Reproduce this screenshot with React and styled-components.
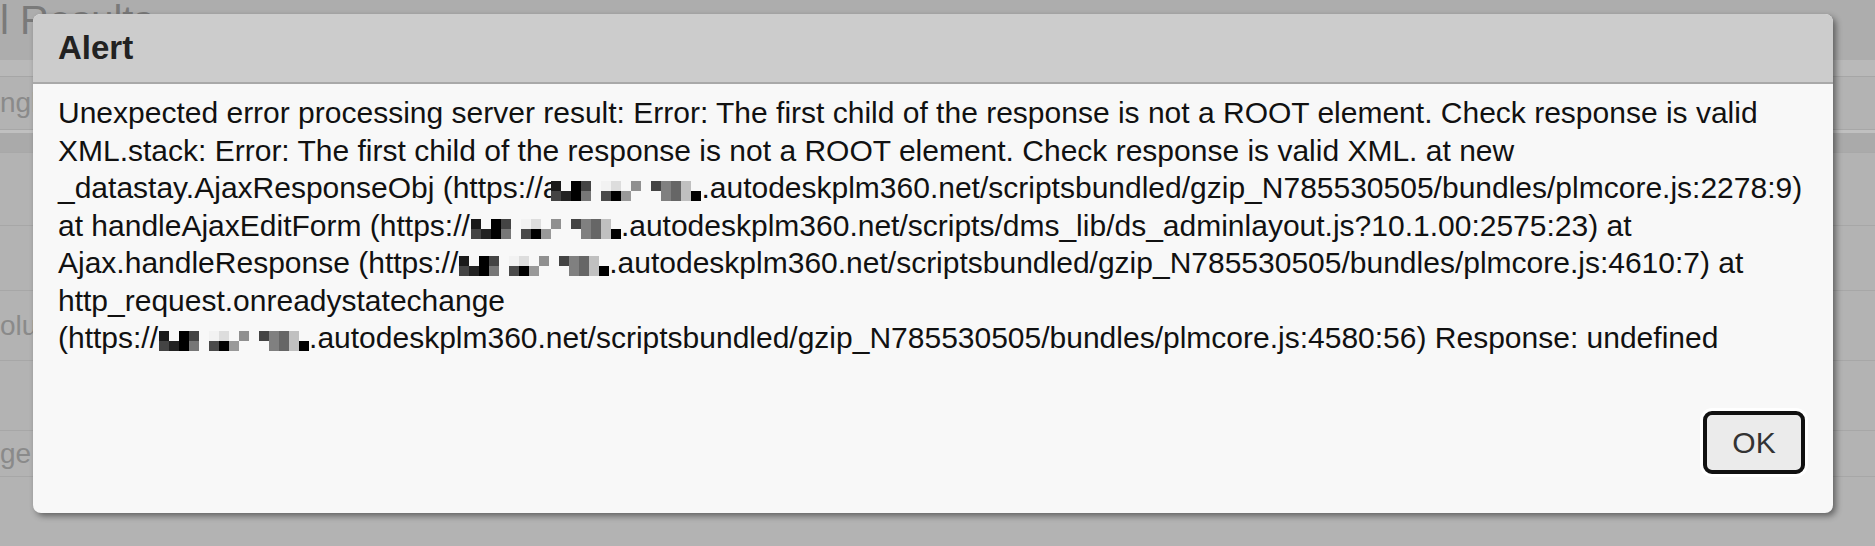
import React from "react";
import styled, { createGlobalStyle } from "styled-components";

const Global = createGlobalStyle`
  html, body { margin: 0; padding: 0; background: #b3b3b3; }
  body { font-family: "Liberation Sans", Arial, sans-serif; }
  #root { width: 1875px; height: 546px; overflow: hidden; position: relative; }
`;

const Page = styled.div`
  width: 1875px;
  height: 546px;
  display: flex;
  flex-direction: column;
  background: #b3b3b3;
  color: #7d7d7d;
`;

const TopBar = styled.div`
  height: 60px;
  background: #adadad;
  display: flex;
  align-items: flex-start;
`;

const PageTitle = styled.div`
  font-size: 40px;
  line-height: 40px;
  color: #7a7a7a;
  white-space: nowrap;
`;

const Band = styled.div`
  height: ${(p) => p.$h}px;
  background: ${(p) => p.$bg};
  border-bottom: 1px solid ${(p) => p.$line || "transparent"};
  flex: none;
`;

const FieldRow = styled.div`
  height: ${(p) => p.$h}px;
  flex: none;
  display: flex;
  align-items: center;
  border-bottom: 1px solid #a7a7a7;
  font-size: 28px;
  color: #8a8a8a;
  white-space: nowrap;
`;

const RedactSvg = styled.svg`
  display: inline-block;
  vertical-align: -3px;
  margin-left: ${(p) => p.$shift}px;
`;

const Redact = ({ top, bottom, shift = 1 }) => (
  <RedactSvg $shift={shift} width="150" height="20" viewBox="0 0 150 20">
    {top.map((c, i) =>
      c ? <rect key={"t" + i} x={i * 10} y="0" width="10" height="10" fill={c} /> : null
    )}
    {bottom.map((c, i) =>
      c ? <rect key={"b" + i} x={i * 10} y="10" width="10" height="10" fill={c} /> : null
    )}
  </RedactSvg>
);

const TOP = ["#1a1a1a", null, "#000", "#444", null, "#f2f2f2", "#ddd", null, "#909090", null, "#444", "#808080", "#666", "#c0c0c0", null];
const BOTTOM = ["#444", "#222", "#000", "#777", null, "#4a4a4a", "#000", "#999", null, null, null, "#808080", "#666", "#c0c0c0", "#000"];

const Dialog = styled.div`
  position: absolute;
  left: 33px;
  top: 14px;
  width: 1800px;
  height: 499px;
  background: #f8f8f8;
  border-radius: 8px;
  box-shadow: 3px 3px 6px rgba(0, 0, 0, 0.45);
  display: flex;
  flex-direction: column;
  overflow: hidden;
`;

const Header = styled.div`
  height: 68px;
  flex: none;
  background: #cccccc;
  border-bottom: 2px solid #a9a9a9;
  display: flex;
  align-items: center;
  padding: 0 25px;
`;

const Title = styled.h1`
  margin: 0;
  font-size: 33px;
  font-weight: 700;
  color: #222;
`;

const Body = styled.div`
  padding: 10px 8px 0 25px;
  font-size: 30px;
  line-height: 37.5px;
  color: #111;
`;

const Url = styled.span`
  white-space: nowrap;
`;

const Footer = styled.div`
  margin-top: auto;
  display: flex;
  justify-content: flex-end;
  padding: 0 28px 39px;
`;

const OkButton = styled.button`
  width: 102px;
  height: 63px;
  border: 4px solid #111;
  border-radius: 9px;
  background: #ebebeb;
  color: #333;
  font-family: "Liberation Sans", Arial, sans-serif;
  font-size: 30px;
  box-shadow: 0 0 0 3px #fff;
  padding: 0;
  cursor: pointer;
`;

const host = (prefix = "", shift = 1) => (
  <>
    (https://{prefix}
    <Redact top={TOP} bottom={BOTTOM} shift={shift} />
  </>
);

export default function App() {
  return (
    <>
      <Global />
      <Page>
        <TopBar>
          <PageTitle>l Results</PageTitle>
        </TopBar>
        <Band $h={16} $bg="#b9b9b9" $line="#a6a6a6" />
        <FieldRow $h={52}>ngle</FieldRow>
        <Band $h={2} $bg="#c0c0c0" />
        <Band $h={19} $bg="#aaaaaa" $line="#a8a8a8" />
        <FieldRow $h={72} />
        <FieldRow $h={64} />
        <FieldRow $h={69}>olu</FieldRow>
        <FieldRow $h={69} />
        <FieldRow $h={45}>ge</FieldRow>
      </Page>
      <Dialog role="alertdialog">
        <Header>
          <Title>Alert</Title>
        </Header>
        <Body>
          Unexpected error processing server result: Error: The first child of the response is not a ROOT
          element. Check response is valid XML.stack: Error: The first child of the response is not a ROOT
          element. Check response is valid XML. at new _datastay.AjaxResponseObj{" "}
          <Url>
            {host("a", -8)}.autodeskplm360.net/scriptsbundled/gzip_N785530505/bundles/plmcore.js:2278:9)
          </Url>{" "}
          at handleAjaxEditForm{" "}
          <Url>{host()}.autodeskplm360.net/scripts/dms_lib/ds_adminlayout.js?10.1.00:2575:23)</Url> at
          Ajax.handleResponse{" "}
          <Url>
            {host()}.autodeskplm360.net/scriptsbundled/gzip_N785530505/bundles/plmcore.js:4610:7)
          </Url>{" "}
          at http_request.onreadystatechange{" "}
          <Url>
            {host()}.autodeskplm360.net/scriptsbundled/gzip_N785530505/bundles/plmcore.js:4580:56)
          </Url>{" "}
          Response: undefined
        </Body>
        <Footer>
          <OkButton>OK</OkButton>
        </Footer>
      </Dialog>
    </>
  );
}
